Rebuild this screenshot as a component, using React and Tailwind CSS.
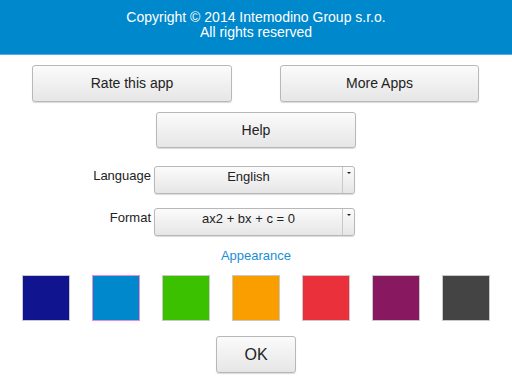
import React from "react";

const btn =
  "flex items-center justify-center border border-[#b8b8b8] rounded-[3px] bg-gradient-to-b from-[#fbfbfb] to-[#e6e6e6] text-[14px] text-[#222] shadow-[0_1px_1px_rgba(0,0,0,0.15)]";

function Select({ value }) {
  return (
    <div className="relative w-[201px] h-[28px] border border-[#b8b8b8] rounded-[3px] bg-gradient-to-b from-[#fbfbfb] to-[#e6e6e6] shadow-[0_1px_1px_rgba(0,0,0,0.15)] flex">
      <div className="flex-1 flex justify-center pt-[1px] leading-[17px] text-[13px] text-[#222]">{value}</div>
      <div className="w-[12px] border-l border-[#c8c8c8] flex justify-center pt-[5px]">
        <div className="w-0 h-0 border-l-[2px] border-r-[2px] border-t-[2px] border-l-transparent border-r-transparent border-t-[#222]"></div>
      </div>
    </div>
  );
}

export default function App() {
  const colors = [
    ["#10148f", "border-[#c8c8c8]"],
    ["#0088cc", "border-[#f08ad8]"],
    ["#3cc100", "border-[#c8c8c8]"],
    ["#fa9e00", "border-[#c8c8c8]"],
    ["#ea303a", "border-[#c8c8c8]"],
    ["#88185f", "border-[#c8c8c8]"],
    ["#444444", "border-[#c8c8c8]"],
  ];
  return (
    <div className="w-[512px] h-[384px] bg-white overflow-hidden flex flex-col" style={{ fontFamily: '"Liberation Sans", Arial, sans-serif' }}>
      <div className="h-[55px] bg-[#0088cc] border-b border-[#4fb0e0] flex flex-col items-center pt-[10px] text-white text-[14px] leading-[15px]">
        <div>Copyright © 2014 Intemodino Group s.r.o.</div>
        <div>All rights reserved</div>
      </div>
      <div className="flex justify-between pl-[32px] pr-[33px] mt-[10px]">
        <div className={`${btn} w-[200px] h-[37px]`}>Rate this app</div>
        <div className={`${btn} w-[199px] h-[37px]`}>More Apps</div>
      </div>
      <div className="flex justify-center mt-[10px]">
        <div className={`${btn} w-[200px] h-[36px]`}>Help</div>
      </div>
      <div className="flex items-center mt-[18px] pl-[154px]">
        <div className="relative">
          <div className="absolute right-[204px] top-[1px] leading-[17px] text-[13px] text-[#222]">Language</div>
          <Select value="English" />
        </div>
      </div>
      <div className="flex items-center mt-[14px] pl-[154px]">
        <div className="relative">
          <div className="absolute right-[204px] top-[1px] leading-[17px] text-[13px] text-[#222]">Format</div>
          <Select value="ax2 + bx + c = 0" />
        </div>
      </div>
      <div className="text-center text-[13px] text-[#1a8ed6] mt-[12px] leading-[15px]">Appearance</div>
      <div className="flex justify-center gap-[22px] mt-[12px]">
        {colors.map(([c, b], i) => (
          <div key={i} className={`w-[48px] h-[46px] border ${b}`} style={{ backgroundColor: c }}></div>
        ))}
      </div>
      <div className="flex justify-center mt-[15px]">
        <div className={`${btn} w-[80px] h-[37px] text-[16px]`}>OK</div>
      </div>
    </div>
  );
}
